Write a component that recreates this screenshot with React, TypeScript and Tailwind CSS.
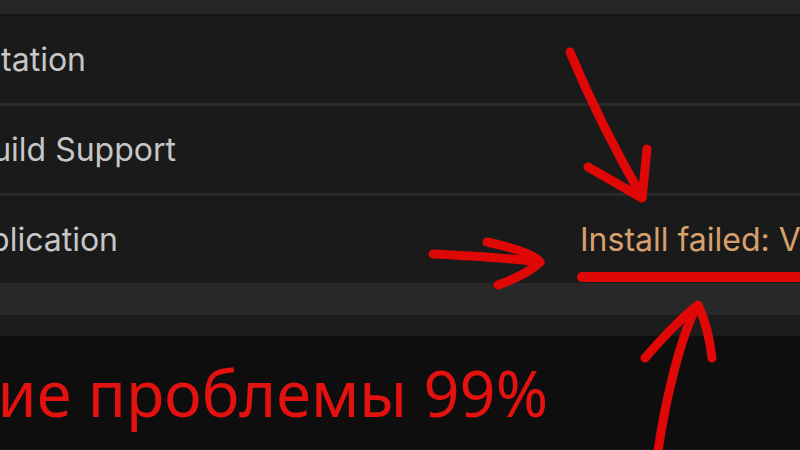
export default function App() {
  const rows = [
    { label: "Documentation", end: "w-[86px]", status: "" },
    { label: "WebGL Build Support", end: "w-[176px]", status: "" },
    { label: "Universal Windows Application", end: "w-[118px]", status: "Install failed: Validation failed" },
  ];

  return (
    <div className="relative w-[800px] h-[450px] overflow-hidden bg-[#1a1a1a] font-['Inter',sans-serif]">
      <div className="h-[14px] bg-[#262626]" />
      <div className="h-[2px] bg-[#161616]" />
      {rows.map((row, i) => (
        <div key={row.label}>
          {i > 0 && <div className="h-[3px] bg-[#2a2a2a]" />}
          <div className="h-[87px] flex items-center">
            <div className={`${row.end} shrink-0 flex justify-end whitespace-nowrap text-[32px] leading-none text-[#c6c6c6]`}>
              <span className="shrink-0">{row.label}</span>
            </div>
            {row.status && (
              <span className="ml-[462px] shrink-0 whitespace-nowrap text-[32px] leading-none text-[#d8a06c]">
                {row.status}
              </span>
            )}
          </div>
        </div>
      ))}
      <div className="h-[32px] bg-[#282828]" />
      <div className="h-[21px] bg-[#1c1c1c]" />
      <div className="h-[113px] bg-[#0e0e0e] pt-[25px]">
        <div className="w-[548px] flex justify-end whitespace-nowrap font-['Noto_Sans',sans-serif] text-[63px] leading-none text-[#e3120f]">
          <span className="shrink-0">Решение проблемы 99%</span>
        </div>
      </div>

      <svg className="absolute inset-0 pointer-events-none" width="800" height="450" viewBox="0 0 800 450" fill="none" stroke="#e00707" strokeLinecap="round" strokeLinejoin="round">
        <path d="M570 52 C590 100 615 150 642 197" strokeWidth="9" />
        <path d="M588 167 L642 198 L647 149" strokeWidth="9" />
        <path d="M433 254 C470 256 510 258 540 262" strokeWidth="9" />
        <path d="M487 242 C515 248 535 255 540 262 C530 272 512 280 498 285" strokeWidth="9" />
        <path d="M582 277 L810 277" strokeWidth="10" />
        <path d="M657 458 C665 400 680 340 696 307" strokeWidth="9" />
        <path d="M645 358 C665 335 685 315 698 305 C705 320 710 340 712 358" strokeWidth="9" />
      </svg>
    </div>
  );
}
